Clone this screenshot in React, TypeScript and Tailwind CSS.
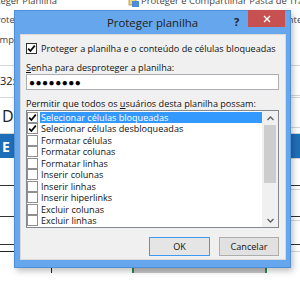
import React from 'react';

const items = [
  { label: 'Selecionar células bloqueadas', checked: true, selected: true },
  { label: 'Selecionar células desbloqueadas', checked: true },
  { label: 'Formatar células' },
  { label: 'Formatar colunas' },
  { label: 'Formatar linhas' },
  { label: 'Inserir colunas' },
  { label: 'Inserir linhas' },
  { label: 'Inserir hiperlinks' },
  { label: 'Excluir colunas' },
  { label: 'Excluir linhas' },
];

function Check({ checked, dark }: { checked?: boolean; dark?: boolean }) {
  return (
    <span
      className={`w-[11px] h-[11px] shrink-0 bg-white border flex items-center justify-center ${
        dark ? 'border-[#333]' : 'border-[#8f8f8f]'
      }`}
    >
      {checked && (
        <svg width="9" height="9" viewBox="0 0 9 9">
          <path d="M1.2 4.6 L3.4 7 L7.8 1.6" fill="none" stroke="#000" strokeWidth="1.7" />
        </svg>
      )}
    </span>
  );
}

function Background() {
  return (
    <div className="absolute inset-0 flex flex-col text-[9.4px] text-[#444]">
      {/* ribbon */}
      <div className="h-[66px] border-b border-[#d5d5d5] flex flex-col">
        <div className="h-[10px] flex items-center -mt-[4px]">
          <span className="-ml-[18px] w-[146px] shrink-0 whitespace-nowrap">Proteger Planilha</span>
          <svg width="12" height="9" viewBox="0 0 12 9" className="mt-[3px] shrink-0">
            <rect x="1" y="0" width="7" height="7" fill="#f3d37a" stroke="#b98a2a" strokeWidth="0.8" />
            <rect x="4" y="3" width="7" height="6" fill="#4a8fd6" />
          </svg>
          <span className="ml-[1px] whitespace-nowrap">Proteger e Compartilhar Pasta de Trabalho</span>
        </div>
        <div className="mt-[4px] h-[20px] flex items-center justify-between">
          <span className="-ml-[9px]">Proteger</span>
          <span className="-mr-[6px]">Manter</span>
        </div>
        <div className="h-[20px] flex items-center">
          <span className="-ml-[12px]">Compartilhar</span>
        </div>
      </div>
      {/* formula bar */}
      <div className="h-[32px] border-b border-[#d5d5d5] flex items-center">
        <span className="-ml-[7px] text-[11px] text-[#222]">A32:B32</span>
      </div>
      <div className="h-[36px] flex items-center border-b border-[#d5d5d5]">
        <span className="ml-[2px] text-[16px] text-[#222]">D</span>
      </div>
      <div className="h-[24px] bg-[#1f6fb8] flex items-center">
        <span className="ml-[2px] text-[14px] font-bold text-white">E</span>
      </div>
      <div className="h-[28px] border-b border-[#333]" />
      <div className="h-[31px] border-b border-[#333]" />
      <div className="h-[28px] border-b border-[#333]" />
      <div className="h-[28px] flex">
        <div className="w-[52px] border-r border-[#222] flex flex-col">
          <div className="h-[7px] border-b border-[#222]" />
        </div>
        <div className="w-[80px] flex flex-col">
          <div className="h-[7px] border-b border-[#222]" />
        </div>
        <div className="w-[135px] bg-[#c8c8c8] border-x-2 border-[#2f8a4f] flex flex-col">
          <div className="h-[7px] border-b border-[#222]" />
        </div>
        <div className="flex-1 flex flex-col">
          <div className="h-[7px] border-b border-[#d5d5d5]" />
        </div>
      </div>
    </div>
  );
}

export default function App() {
  return (
    <div className="relative w-[300px] h-[282px] overflow-hidden bg-white font-['Open_Sans',sans-serif]">
      <Background />
      {/* right-hand gridlines peeking past the dialog */}
      <div className="absolute right-0 top-[64px] w-[12px] flex flex-col">
        {[32, 32, 31, 31, 31, 31].map((h, i) => (
          <div key={i} style={{ height: h }} className="border-b border-[#d5d5d5]" />
        ))}
      </div>

      {/* dialog */}
      <div className="absolute left-[14px] top-[10px] w-[277px] h-[258px] bg-[#66a6ec] border border-[#4d8fd8] shadow-[2px_3px_6px_rgba(0,0,0,0.25)] flex flex-col">
        <div className="h-[23px] relative flex items-center justify-center">
          <span className="text-[11.4px] text-[#222] mt-[1px]">Proteger planilha</span>
          <span className="absolute left-[219px] top-[3px] text-[11px] font-bold text-[#222]">?</span>
          <div className="absolute left-[233px] -top-[1px] w-[37px] h-[17px] bg-[#c75050] flex items-center justify-center">
            <svg width="8" height="8" viewBox="0 0 8 8">
              <path d="M1 1 L7 7 M7 1 L1 7" stroke="#fff" strokeWidth="1.4" />
            </svg>
          </div>
        </div>
        <div className="ml-[5px] mr-[4px] h-[226px] bg-[#f0f0f0] border border-[#d9d9d9] flex flex-col px-[5px] text-[9.1px] leading-[11px] text-[#111]">
          <div className="mt-[8px] flex items-center gap-[4px] h-[11px]">
            <Check checked dark />
            <span className="whitespace-nowrap">Proteger a planilha e o conteúdo de células bloqueadas</span>
          </div>
          <div className="mt-[8px] h-[11px] flex items-center whitespace-nowrap">
            <span>
              <span className="underline underline-offset-1">S</span>enha para desproteger a planilha:
            </span>
          </div>
          <div className="mt-[1px] w-[253px] h-[16px] bg-white border border-[#abadb3] flex items-center pl-[2px]">
            <span className="text-[10px] leading-[12px] tracking-[0.5px] text-black">●●●●●●●●</span>
          </div>
          <div className="mt-[8px] h-[11px] flex items-center whitespace-nowrap">
            <span>
              Permitir que todos os <span className="underline underline-offset-1">u</span>suários desta planilha possam:
            </span>
          </div>
          <div className="mt-[1px] w-[253px] h-[118px] bg-white border border-[#828790] flex">
            <div className="flex-1 flex flex-col pt-[0.5px]">
              {items.map((it) => (
                <div key={it.label} className="h-[11.5px] flex items-center">
                  <Check checked={it.checked} />
                  <span
                    className={`ml-[2px] flex-1 h-[11px] flex items-center pl-[1px] whitespace-nowrap ${
                      it.selected ? 'bg-[#3399ff] text-white' : ''
                    }`}
                  >
                    {it.label}
                  </span>
                </div>
              ))}
            </div>
            <div className="w-[16px] bg-[#f0f0f0] flex flex-col items-center">
              <div className="h-[14px] flex items-center justify-center">
                <svg width="7" height="5" viewBox="0 0 7 5">
                  <path d="M0.5 4 L3.5 1 L6.5 4" fill="none" stroke="#606060" strokeWidth="1.3" />
                </svg>
              </div>
              <div className="w-[12px] h-[58px] bg-[#cdcdcd]" />
              <div className="flex-1" />
              <div className="h-[14px] flex items-center justify-center">
                <svg width="7" height="5" viewBox="0 0 7 5">
                  <path d="M0.5 1 L3.5 4 L6.5 1" fill="none" stroke="#606060" strokeWidth="1.3" />
                </svg>
              </div>
            </div>
          </div>
          <div className="mt-[9px] flex justify-end gap-[9px] pr-[1px]">
            <button className="w-[61px] h-[19px] bg-[#e5e5e5] border border-[#3c9af0] text-[9.1px] text-[#111]">
              OK
            </button>
            <button className="w-[60px] h-[19px] bg-[#e1e1e1] border border-[#adadad] text-[9.1px] text-[#111]">
              Cancelar
            </button>
          </div>
        </div>
      </div>
    </div>
  );
}
